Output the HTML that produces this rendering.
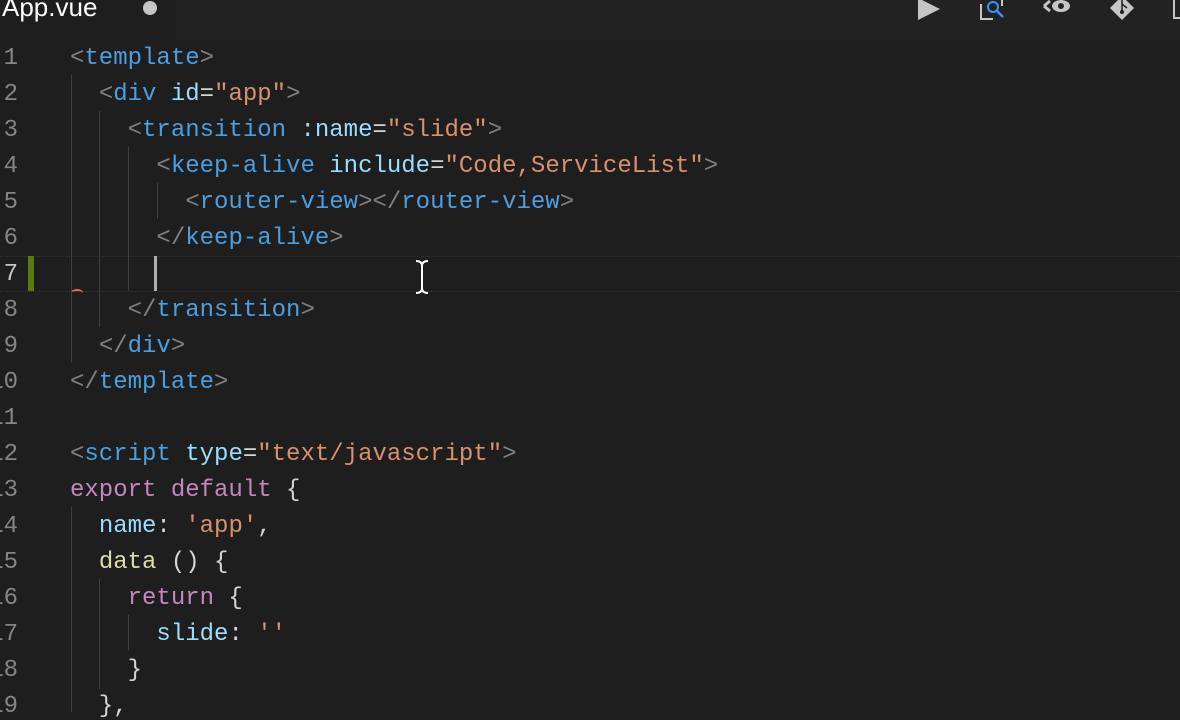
<!DOCTYPE html><html><head><style>
body{margin:0;width:1180px;height:712px;background:#1e1e1e;overflow:hidden;position:relative;font-family:"Liberation Mono",monospace;}
.tabbar{position:absolute;left:0;top:0;width:1180px;height:40px;background:#222222;}
.tab{position:absolute;left:0;top:0;height:40px;width:176px;background:#1e1e1e;}
.tab span{position:absolute;left:2px;top:-8px;font:26px "Liberation Sans",sans-serif;color:#fff;}
.dot{position:absolute;left:143px;top:1px;width:14px;height:14px;border-radius:50%;background:#c5c5c5;}
.ln{position:absolute;left:-20px;width:38px;text-align:right;font-size:24px;color:#858585;}
.ln.a{color:#c6c6c6}
.c{position:absolute;left:70px;font-size:24px;color:#d4d4d4;white-space:pre;}
.g{position:absolute;width:1px;background:#404040;}
.p{color:#808080}.t{color:#4a9fe0}.at{color:#9cdcfe}.s{color:#d8906e}.k{color:#c586c0}.f{color:#dcdcaa}
</style></head><body>
<div class="tabbar"><div class="tab"><span>App.vue</span><div class="dot"></div></div>
<svg style="position:absolute;left:918px;top:0" width="262" height="22">
<path d="M0 -2 L22 9 L0 20Z" fill="#c5c5c5"/>
<path d="M63 4 V19 H75 M84 0 V6" stroke="#c5c5c5" stroke-width="2" fill="none"/>
<circle cx="75" cy="7" r="5" stroke="#3794ff" stroke-width="2" fill="none"/><path d="M79 11 L85 17" stroke="#3794ff" stroke-width="2.5"/>
<path d="M126 6 L132 1 M126 6 L132 11" stroke="#c5c5c5" stroke-width="3"/><ellipse cx="143" cy="6" rx="9" ry="6" fill="#c5c5c5"/><circle cx="143" cy="6" r="3" fill="#222"/>
<path d="M204 -4 L216 8 L204 20 L192 8Z" fill="#c5c5c5"/><circle cx="204" cy="12" r="2" fill="#222"/><path d="M204 0 V12 M204 4 L209 8" stroke="#222" stroke-width="1.5"/>
<path d="M256 0 V18 H262" stroke="#c5c5c5" stroke-width="2" fill="none"/>
</svg></div>
<div style="position:absolute;left:0;top:256px;width:1180px;height:34px;border-top:1px dotted #333;border-bottom:1px dotted #333"></div>
<div style="position:absolute;left:28px;top:256px;width:6px;height:35px;background:#587c0c"></div>
<div style="position:absolute;left:154px;top:256px;width:3px;height:35px;background:#aeafad"></div>
<div style="position:absolute;left:71px;top:289px;width:12px;height:6px;border-top:2px solid #e06c4c;border-radius:50%"></div>
<svg style="position:absolute;left:414px;top:260px" width="16" height="34"><path d="M2 1 Q8 1 8 6 Q8 1 14 1 M8 6 V28 M2 33 Q8 33 8 28 Q8 33 14 33" stroke="#fff" stroke-width="2" fill="none"/></svg>
<div class="g" style="left:71px;top:75px;height:288px"></div>
<div class="g" style="left:99px;top:111px;height:216px"></div>
<div class="g" style="left:128px;top:147px;height:144px"></div>
<div class="g" style="left:157px;top:183px;height:36px"></div>
<div class="g" style="left:71px;top:507px;height:205px"></div>
<div class="g" style="left:99px;top:579px;height:110px"></div>
<div class="g" style="left:128px;top:615px;height:36px"></div>
<div class="ln" style="top:45px">1</div><div class="c" style="top:45px"><span class="p">&lt;</span><span class="t">template</span><span class="p">&gt;</span></div>
<div class="ln" style="top:81px">2</div><div class="c" style="top:81px">  <span class="p">&lt;</span><span class="t">div</span> <span class="at">id</span>=<span class="s">"app"</span><span class="p">&gt;</span></div>
<div class="ln" style="top:117px">3</div><div class="c" style="top:117px">    <span class="p">&lt;</span><span class="t">transition</span> <span class="at">:name</span>=<span class="s">"slide"</span><span class="p">&gt;</span></div>
<div class="ln" style="top:153px">4</div><div class="c" style="top:153px">      <span class="p">&lt;</span><span class="t">keep-alive</span> <span class="at">include</span>=<span class="s">"Code,ServiceList"</span><span class="p">&gt;</span></div>
<div class="ln" style="top:189px">5</div><div class="c" style="top:189px">        <span class="p">&lt;</span><span class="t">router-view</span><span class="p">&gt;&lt;/</span><span class="t">router-view</span><span class="p">&gt;</span></div>
<div class="ln" style="top:225px">6</div><div class="c" style="top:225px">      <span class="p">&lt;/</span><span class="t">keep-alive</span><span class="p">&gt;</span></div>
<div class="ln a" style="top:261px">7</div>
<div class="ln" style="top:297px">8</div><div class="c" style="top:297px">    <span class="p">&lt;/</span><span class="t">transition</span><span class="p">&gt;</span></div>
<div class="ln" style="top:333px">9</div><div class="c" style="top:333px">  <span class="p">&lt;/</span><span class="t">div</span><span class="p">&gt;</span></div>
<div class="ln" style="top:369px">10</div><div class="c" style="top:369px"><span class="p">&lt;/</span><span class="t">template</span><span class="p">&gt;</span></div>
<div class="ln" style="top:405px">11</div>
<div class="ln" style="top:441px">12</div><div class="c" style="top:441px"><span class="p">&lt;</span><span class="t">script</span> <span class="at">type</span>=<span class="s">"text/javascript"</span><span class="p">&gt;</span></div>
<div class="ln" style="top:477px">13</div><div class="c" style="top:477px"><span class="k">export default</span> {</div>
<div class="ln" style="top:513px">14</div><div class="c" style="top:513px">  <span class="at">name</span>: <span class="s">'app'</span>,</div>
<div class="ln" style="top:549px">15</div><div class="c" style="top:549px">  <span class="f">data</span> () {</div>
<div class="ln" style="top:585px">16</div><div class="c" style="top:585px">    <span class="k">return</span> {</div>
<div class="ln" style="top:621px">17</div><div class="c" style="top:621px">      <span class="at">slide</span>: <span class="s">''</span></div>
<div class="ln" style="top:657px">18</div><div class="c" style="top:657px">    }</div>
<div class="ln" style="top:693px">19</div><div class="c" style="top:693px">  },</div>
</body></html>
